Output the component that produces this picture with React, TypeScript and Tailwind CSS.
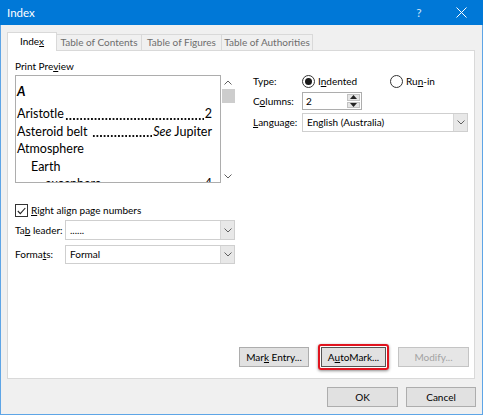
import React from 'react'

function U({ c }: { c: string }) {
  return <span className="underline underline-offset-[1px]">{c}</span>
}

function Chevron({ up = false }: { up?: boolean }) {
  return (
    <svg width="8" height="5" viewBox="0 0 8 5" className={up ? 'rotate-180' : ''}>
      <path d="M0.5 0.5 L4 4 L7.5 0.5" fill="none" stroke="#606060" strokeWidth="1" />
    </svg>
  )
}

function Select({ value, w }: { value: string; w: string }) {
  return (
    <div className={`${w} h-full flex border border-[#cfcfcf] bg-white`}>
      <div className="flex-1 flex items-center pl-[4px] text-black">{value}</div>
      <div className="w-[14px] flex items-center justify-center bg-[#e8e8e8] border-l border-[#d6d6d6]">
        <Chevron />
      </div>
    </div>
  )
}

function Btn({ children, w, disabled = false }: { children: React.ReactNode; w: string; disabled?: boolean }) {
  return (
    <div
      className={`${w} h-[20px] flex items-center justify-center border ${
        disabled ? 'bg-[#e6e6e6] border-[#c4c4c4] text-[#a3a3a3]' : 'bg-[#e1e1e1] border-[#adadad] text-black'
      }`}
    >
      {children}
    </div>
  )
}

// dotted tab leader drawn as a repeating dot background
function Leader({ left, right, indent = '' }: { left: React.ReactNode; right: React.ReactNode; indent?: string }) {
  return (
    <div className={`flex h-[17.5px] items-center whitespace-nowrap ${indent}`}>
      <span className="shrink-0">{left}</span>
      <span className="flex-1 min-w-0 self-end mb-[4px] mx-[1px] h-[2px] bg-[radial-gradient(circle,#111_0.75px,transparent_1.05px)] bg-[length:3.6px_2px] bg-repeat-x" />
      <span className="shrink-0">{right}</span>
    </div>
  )
}

export default function App() {
  const tabs = [
    { label: 'Table of Contents', w: 'w-[85px]' },
    { label: 'Table of Figures', w: 'w-[80px]' },
    { label: 'Table of Authorities', w: 'w-[91px]' },
  ]

  return (
    <div className="w-[483px] h-[415px] flex flex-col bg-[#f0f0f0] text-[10px] font-['Lato','Open_Sans',sans-serif] text-black whitespace-nowrap">
      {/* title bar */}
      <div className="h-[25px] bg-[#0078d7] flex items-center text-white shrink-0">
        <div className="pl-[7px] text-[11.5px] flex-1">Index</div>
        <div className="w-[40px] text-center text-[12px] text-[#cfe4f7]">?</div>
        <div className="w-[44px] flex items-center justify-center">
          <svg width="11" height="11" viewBox="0 0 11 11">
            <path d="M0.5 0.5 L10.5 10.5 M10.5 0.5 L0.5 10.5" stroke="#ffffff" strokeWidth="1" />
          </svg>
        </div>
      </div>

      <div className="flex-1 flex flex-col border-x border-b border-[#5ea5e6] px-[6px] pt-[7px]">
        {/* tabs */}
        <div className="h-[18px] flex items-end">
          <div className="w-[50px] h-[19px] -mb-px relative z-10 bg-white border border-b-0 border-[#d9d9d9] flex items-center justify-center pb-[1px]">
            Inde<U c="x" />
          </div>
          {tabs.map((t) => (
            <div
              key={t.label}
              className={`${t.w} h-[16px] bg-[#f0f0f0] border border-l-0 border-b-0 border-[#d9d9d9] flex items-center justify-center text-[#6d6d6d]`}
            >
              {t.label}
            </div>
          ))}
        </div>

        {/* panel */}
        <div className="w-[468px] h-[329px] bg-white border border-[#d9d9d9] flex flex-col">
          <div className="flex pl-[7px]">
            {/* left column */}
            <div className="w-[220px] flex flex-col">
              <div className="mt-[8px] h-[14px] leading-[14px]">
                Print Pre<U c="v" />iew
              </div>
              <div className="mt-[2px] h-[108px] flex">
                <div className="w-[206px] h-full border border-[#adadad] overflow-hidden pl-[1px] pr-[8px] pt-[7px] text-[12.5px] font-['Lato',sans-serif]">
                  <div className="h-[18px] flex items-center font-bold italic text-[13px]">A</div>
                  <div className="mt-[5px]">
                    <Leader left="Aristotle" right="2" />
                    <Leader left={<>Asteroid belt&nbsp;</>} right={<><i>See</i> Jupiter</>} />
                    <div className="h-[17.5px] flex items-center">Atmosphere</div>
                    <div className="h-[17.5px] flex items-center pl-[14px]">Earth</div>
                    <Leader left={<>exosphere&nbsp;</>} right="4" indent="pl-[28px]" />
                  </div>
                </div>
                <div className="w-[14px] h-full flex flex-col items-center">
                  <div className="h-[14px] flex items-center justify-center">
                    <Chevron up />
                  </div>
                  <div className="w-[13px] h-[14px] bg-[#cdcdcd]" />
                  <div className="flex-1" />
                  <div className="h-[14px] flex items-center justify-center">
                    <Chevron />
                  </div>
                </div>
              </div>

              <div className="mt-[21px] h-[13px] flex items-center">
                <div className="w-[13px] h-[13px] border border-[#333333] flex items-center justify-center bg-white">
                  <svg width="9" height="8" viewBox="0 0 9 8">
                    <path d="M0.8 4 L3.3 6.6 L8.3 1" fill="none" stroke="#222222" strokeWidth="1.1" />
                  </svg>
                </div>
                <span className="ml-[3px]">
                  <U c="R" />ight align page numbers
                </span>
              </div>

              <div className="mt-[3px] h-[20px] flex items-center">
                <div className="w-[50px]">
                  Ta<U c="b" /> leader:
                </div>
                <Select value="......" w="w-[170px]" />
              </div>
              <div className="mt-[5px] h-[19px] flex items-center">
                <div className="w-[50px]">
                  Forma<U c="t" />s:
                </div>
                <Select value="Formal" w="w-[170px]" />
              </div>
            </div>

            {/* right column */}
            <div className="ml-[18px] w-[215px] flex flex-col">
              <div className="mt-[22px] h-[16px] flex items-center">
                <div className="w-[49px]">Type:</div>
                <div className="w-[13px] h-[13px] rounded-full border border-[#333333] flex items-center justify-center">
                  <div className="w-[7px] h-[7px] rounded-full bg-[#1a1a1a]" />
                </div>
                <span className="ml-[3px] w-[72px]">
                  I<U c="n" />dented
                </span>
                <div className="w-[13px] h-[13px] rounded-full border border-[#333333]" />
                <span className="ml-[3px]">
                  Ru<U c="n" />-in
                </span>
              </div>
              <div className="mt-[3px] h-[18px] flex items-center">
                <div className="w-[49px]">
                  C<U c="o" />lumns:
                </div>
                <div className="w-[60px] h-full border border-[#adadad] flex">
                  <div className="flex-1 pl-[3px] flex items-center">2</div>
                  <div className="w-[15px] flex flex-col gap-px p-px">
                    <div className="flex-1 bg-[#e5e5e5] border border-[#c2c2c2] flex items-center justify-center">
                      <svg width="7" height="4" viewBox="0 0 7 4"><path d="M0 4 L3.5 0 L7 4 Z" fill="#222" /></svg>
                    </div>
                    <div className="flex-1 bg-[#e5e5e5] border border-[#c2c2c2] flex items-center justify-center">
                      <svg width="7" height="4" viewBox="0 0 7 4"><path d="M0 0 L3.5 4 L7 0 Z" fill="#222" /></svg>
                    </div>
                  </div>
                </div>
              </div>
              <div className="mt-[3px] h-[19px] flex items-center">
                <div className="w-[49px]">
                  <U c="L" />anguage:
                </div>
                <Select value="English (Australia)" w="w-[166px]" />
              </div>
            </div>
          </div>

          {/* panel buttons */}
          <div className="mt-auto mb-[8px] pr-[5px] flex justify-end items-center">
            <Btn w="w-[70px]">
              Mar<U c="k" />&nbsp;Entry...
            </Btn>
            <div className="ml-[9px] p-[1px] rounded-[3px] border-2 border-[#e0141e] shadow-[0_1px_3px_rgba(0,0,0,0.45)]">
              <div className="w-[65px] h-[20px] flex items-center justify-center bg-[#e1e1e1] border border-[#555555]">
                A<U c="u" />toMark...
              </div>
            </div>
            <div className="ml-[9px]">
              <Btn w="w-[71px]" disabled>
                Modify...
              </Btn>
            </div>
          </div>
        </div>

        {/* dialog buttons */}
        <div className="mt-[8px] flex justify-end gap-[8px]">
          <Btn w="w-[71px]">OK</Btn>
          <Btn w="w-[70px]">Cancel</Btn>
        </div>
      </div>
    </div>
  )
}
